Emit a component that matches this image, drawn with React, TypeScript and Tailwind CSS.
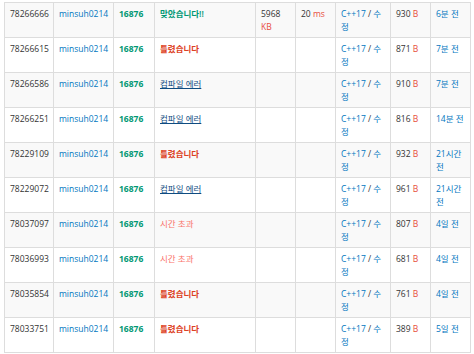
const ROWS = [
  { id: "78266666", result: "ac", mem: "5968", time: "20", len: "930", ago: "6분 전" },
  { id: "78266615", result: "wa", len: "871", ago: "7분 전" },
  { id: "78266586", result: "ce", len: "910", ago: "7분 전" },
  { id: "78266251", result: "ce", len: "816", ago: "14분 전" },
  { id: "78229109", result: "wa", len: "932", ago: "21시간 전" },
  { id: "78229072", result: "ce", len: "961", ago: "21시간 전" },
  { id: "78037097", result: "tle", len: "807", ago: "4일 전" },
  { id: "78036993", result: "tle", len: "681", ago: "4일 전" },
  { id: "78035854", result: "wa", len: "761", ago: "4일 전" },
  { id: "78033751", result: "wa", len: "389", ago: "5일 전" },
];

function Result({ kind }: { kind: string }) {
  if (kind === "ac") return <span className="font-semibold text-[#009874]">맞았습니다!!</span>;
  if (kind === "wa") return <span className="font-semibold text-[#dd4124]">틀렸습니다</span>;
  if (kind === "tle") return <span className="text-[#fa7268]">시간 초과</span>;
  return <span className="text-[#0f4c81] underline">컴파일 에러</span>;
}

const td = "border border-[#dddddd] px-[5px] py-[4px] align-top";

export default function App() {
  return (
    <div
      className="w-[474px] h-[354px] overflow-hidden bg-white pt-[2px] pl-[4px] text-[8.5px] leading-[13px] text-[#333333]"
      style={{ fontFamily: '"Open Sans", "Noto Sans CJK KR", sans-serif' }}
    >
      <table className="w-[466px] table-fixed border-collapse">
        <colgroup>
          <col className="w-[49px]" />
          <col className="w-[60px]" />
          <col className="w-[41px]" />
          <col className="w-[101px]" />
          <col className="w-[40px]" />
          <col className="w-[40px]" />
          <col className="w-[55px]" />
          <col className="w-[40px]" />
          <col className="w-[40px]" />
        </colgroup>
        <tbody>
          {ROWS.map((r, i) => (
            <tr key={r.id} className={i % 2 === 0 ? "bg-[#f9f9f9]" : "bg-white"}>
              <td className={td}>{r.id}</td>
              <td className={td}>
                <span className="text-[#0076c0]">minsuh0214</span>
              </td>
              <td className={td}>
                <span className="font-bold text-[#009874]">16876</span>
              </td>
              <td className={td}>
                <Result kind={r.result} />
              </td>
              <td className={td}>
                {r.mem && (
                  <>
                    {r.mem} <span className="text-[#e74c3c]">KB</span>
                  </>
                )}
              </td>
              <td className={td}>
                {r.time && (
                  <>
                    {r.time} <span className="text-[#e74c3c]">ms</span>
                  </>
                )}
              </td>
              <td className={td}>
                <span className="text-[#0076c0]">C++17</span> / <span className="text-[#0076c0]">수정</span>
              </td>
              <td className={td}>
                {r.len} <span className="text-[#e74c3c]">B</span>
              </td>
              <td className={td}>
                <span className="text-[#0076c0]">{r.ago}</span>
              </td>
            </tr>
          ))}
        </tbody>
      </table>
    </div>
  );
}
